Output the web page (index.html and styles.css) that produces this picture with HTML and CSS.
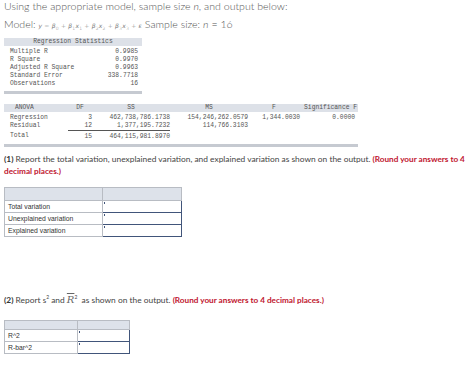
FILE: index.html
```html
<!DOCTYPE html>
<html>
<head>
<meta charset="utf-8">
<link rel="stylesheet" href="styles.css">
</head>
<body>
<div class="page">
  <p class="intro">Using the appropriate model, sample size <i>n</i>, and output below:</p>
  <p class="model">Model: <span class="math"><i>y</i> = <i>β</i><sub>0</sub> + <i>β</i><sub>1</sub><i>x</i><sub>1</sub> + <i>β</i><sub>2</sub><i>x</i><sub>2</sub> + <i>β</i><sub>3</sub><i>x</i><sub>3</sub> + <i>ε</i></span> Sample size: <i>n</i> = 16</p>

  <table class="mono stats">
    <tr class="hd"><th colspan="2">Regression Statistics</th></tr>
    <tr><td class="lbl">Multiple R</td><td class="num">0.9985</td></tr>
    <tr><td class="lbl">R Square</td><td class="num">0.9970</td></tr>
    <tr><td class="lbl">Adjusted R Square</td><td class="num">0.9963</td></tr>
    <tr><td class="lbl">Standard Error</td><td class="num">338.7718</td></tr>
    <tr><td class="lbl">Observations</td><td class="num">16</td></tr>
    <tr class="foot"><td colspan="2"></td></tr>
  </table>

  <table class="mono anova">
    <colgroup><col class="c1"><col class="c2"><col class="c3"><col class="c4"><col class="c5"><col class="c6"></colgroup>
    <tr class="hd"><th class="h1">ANOVA</th><th>DF</th><th>SS</th><th>MS</th><th>F</th><th class="h6">Significance F</th></tr>
    <tr class="r1"><td class="lbl">Regression</td><td class="num">3</td><td class="num">462,738,786.1738</td><td class="num">154,246,262.0579</td><td class="num">1,344.0030</td><td class="num">0.0000</td></tr>
    <tr><td class="lbl">Residual</td><td class="num ul">12</td><td class="num ul">1,377,195.7232</td><td class="num">114,766.3103</td><td></td><td></td></tr>
    <tr class="tot"><td class="lbl">Total</td><td class="num ul">15</td><td class="num ul">464,115,981.8970</td><td></td><td></td><td></td></tr>
    <tr class="foot"><td colspan="6"></td></tr>
  </table>

  <p class="q q1"><span class="line1"><b>(1)</b> Report the total variation, unexplained variation, and explained variation as shown on the output. <b class="red">(Round your answers to 4</b></span><br><b class="red">decimal places.)</b></p>

  <table class="ans ans1">
    <tr class="hd"><td class="l"></td><td class="v"></td></tr>
    <tr><td class="l">Total variation</td><td class="v inp"><span class="mark"></span></td></tr>
    <tr><td class="l">Unexplained variation</td><td class="v inp"><span class="mark"></span></td></tr>
    <tr><td class="l">Explained variation</td><td class="v inp"><span class="mark"></span></td></tr>
  </table>

  <p class="q q2"><b>(2)</b> Report <span class="sm">s</span><sup>2</sup> and <span class="rbar"><i>R</i></span><sup>2</sup> &nbsp;as shown on the output. <b class="red">(Round your answers to 4 decimal places.)</b></p>

  <table class="ans ans2">
    <tr class="hd"><td class="l"></td><td class="v"></td></tr>
    <tr><td class="l">R^2</td><td class="v inp"><span class="mark"></span></td></tr>
    <tr><td class="l">R-bar^2</td><td class="v inp"><span class="mark"></span></td></tr>
  </table>
</div>
</body>
</html>
```

FILE: styles.css
```css
html, body { margin: 0; padding: 0; background: #fff; }
.page {
  padding: 0 4px;
  font-family: Lato, "Open Sans", "Liberation Sans", sans-serif;
  color: #555;
  width: 466px;
}
p { margin: 0; }
.intro { font-size: 10.6px; line-height: 12px; font-weight: 300; color: #555; }
.model { font-size: 10.6px; line-height: 12px; margin-top: 6px; font-weight: 300; color: #555; }
.math { font-family: "DejaVu Sans", sans-serif; font-size: 6px; color: #777; letter-spacing: 0.2px; }
.math sub { font-size: 4.5px; }

table { border-collapse: collapse; }
.mono { font-family: "Liberation Mono", "DejaVu Sans Mono", monospace; font-size: 6.3px; color: #555; }
.mono td, .mono th { padding: 0; height: 8px; line-height: 8px; font-weight: normal; white-space: nowrap; }
.mono .hd th { background: #dde1e8; }
.mono .foot td { height: 3px; line-height: 3px; background: #c6cad1; }
.num { text-align: right; }

.stats { width: 138px; margin-top: 3px; }
.stats .hd th { text-align: center; height: 8px; }
.stats .lbl { padding-left: 6px; }
.stats .num { padding-right: 4px; }
.stats tr:nth-child(2) td { padding-top: 2px; }
.stats .foot td { border-top: 3px solid #fff; }

.anova { width: 354px; margin-top: 10px; table-layout: fixed; }
.anova .c1 { width: 64px; }
.anova .c2 { width: 24px; }
.anova .c3 { width: 78px; }
.anova .c4 { width: 78px; }
.anova .c5 { width: 52px; }
.anova .c6 { width: 58px; }
.anova .hd th { text-align: center; }
.anova .hd .h1 { text-align: left; padding-left: 11px; }
.anova .hd .h6 { text-align: right; padding-right: 1px; }
.anova .lbl { padding-left: 6px; }
.anova .r1 td { padding-top: 2px; }
.anova .r1 td:nth-child(6) { padding-right: 3px; }
.anova .ul { border-bottom: 1.5px solid #555; }
.anova .tot td { padding-top: 1px; height: 9px; }
.anova .foot td { border-top: 3px solid #fff; }

.q { font-size: 8.4px; line-height: 12px; color: #444; }
.q b { font-weight: bold; color: #333; }
.q b.red { color: #c0142e; font-size: 8.2px; }
.line1 { white-space: nowrap; }
.q1 { margin-top: 6px; }
.q2 { margin-top: 54px; }
.sm { font-size: 8px; }
.q sup { font-size: 5px; vertical-align: 4px; }
.rbar { font-family: "DejaVu Serif", serif; font-size: 10px; color: #666; text-decoration: overline; }

.ans { font-family: "Liberation Sans", Arial, sans-serif; font-size: 6.8px; color: #333; }
.ans td { padding: 0 0 0 3px; height: 11px; line-height: 11px; border: 1px solid #b8bcc3; }
.ans .l { background: #fff; }
.ans .hd .l, .ans .hd .v { background: #dde2ea; }
.ans .inp { border: 1.5px solid #41557a; position: relative; padding: 0; }
.ans .mark { position: absolute; left: 1px; top: 1px; width: 1px; height: 2px; background: #41557a; }
.ans1 { margin-top: 10px; }
.ans1 .hd td { height: 12px; }
.ans1 .l { width: 94px; }
.ans1 .v { width: 75px; }
.ans2 { margin-top: 14px; }
.ans2 .hd td { height: 8px; }
.ans2 .l { width: 69px; }
.ans2 .v { width: 48px; }
```
